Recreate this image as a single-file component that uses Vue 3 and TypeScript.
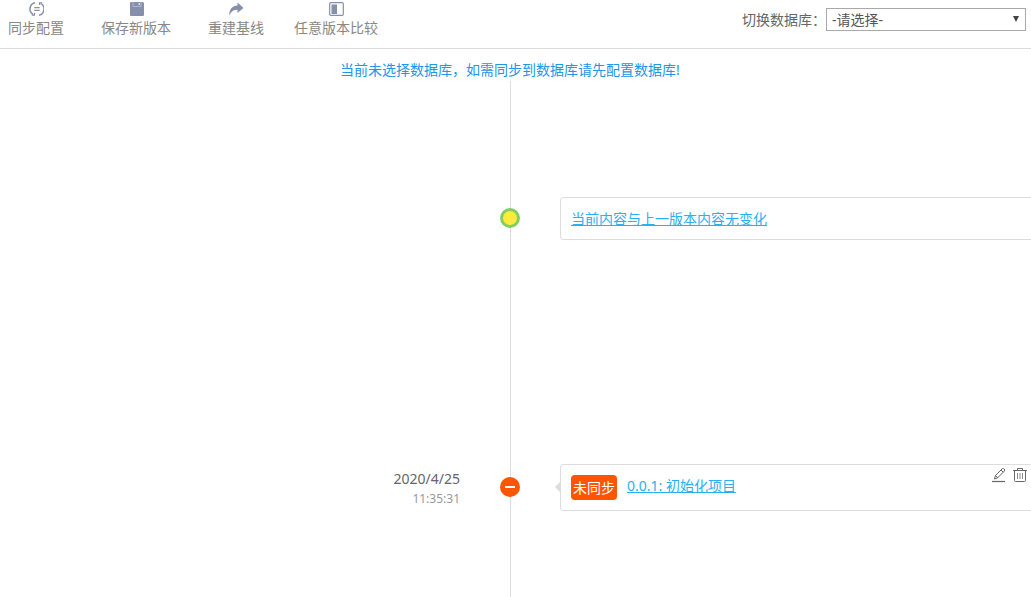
<script setup lang="ts">
import { ref } from 'vue'

interface Tool {
  id: string
  label: string
}

const tools: Tool[] = [
  { id: 'sync', label: '同步配置' },
  { id: 'save', label: '保存新版本' },
  { id: 'rebuild', label: '重建基线' },
  { id: 'compare', label: '任意版本比较' },
]
const database = ref('')
</script>

<template>
  <div class="page">
    <header class="toolbar">
      <nav class="tools">
        <button v-for="tool in tools" :key="tool.id" type="button" class="tool">
          <svg class="tool-icon" viewBox="0 0 16 16" aria-hidden="true">
            <g v-if="tool.id === 'sync'" fill="none" stroke="#8690ac" stroke-width="1.5">
              <path d="M7 2.800A6.300 6.300 0 0 0 5.500 14.600M11 15.200A6.300 6.300 0 0 0 12.500 3.400" />
              <path d="M6.300 7.700h5.400M6.300 10.400h5.400" stroke-width="1.300" />
              <path d="M3.800 15.300H6.500V13M14.200 2.700H11.500V5" stroke-width="1.100" />
            </g>
            <g v-else-if="tool.id === 'save'">
              <path fill="#8690ac" d="M3 2h12l1 1v12a1 1 0 0 1-1 1H3a1 1 0 0 1-1-1V3a1 1 0 0 1 1-1z" />
              <path d="M5 2v4.500h8V2" fill="none" stroke="#b9bfcf" stroke-width=".8" />
              <path d="M10.500 3h1.500v2h-1.500z" fill="#d5d9e3" />
            </g>
            <path v-else-if="tool.id === 'rebuild'" fill="#8690ac" d="M9.500 2.500 15.500 8l-6 5v-3.200C5.500 9.600 3 11.500 1.300 15.500 1 9.500 4.200 5.800 9.500 5.500z" />
            <g v-else>
              <rect x="1.700" y="2.700" width="13.600" height="12.600" rx="1" fill="none" stroke="#8690ac" stroke-width="1.200" />
              <path fill="#8690ac" d="M3.500 4.500H9v9.500H3.500z" />
            </g>
          </svg>
          <span>{{ tool.label }}</span>
        </button>
      </nav>
      <div class="switcher">
        <label for="database">切换数据库：</label>
        <span class="select-box">
          <select id="database" v-model="database">
            <option value="">-请选择-</option>
          </select>
          <svg class="caret" viewBox="0 0 8 8" aria-hidden="true"><path d="M1 1h6L4 7z" fill="#444" /></svg>
        </span>
      </div>
    </header>

    <main class="content">
      <p class="notice">当前未选择数据库，如需同步到数据库请先配置数据库!</p>
      <ol class="timeline">
        <li class="entry">
          <span class="node current"></span>
          <div class="card">
            <a href="#current">当前内容与上一版本内容无变化</a>
          </div>
        </li>
        <li class="entry">
          <div class="when">
            <time class="date" datetime="2020-04-25">2020/4/25</time>
            <time class="time" datetime="11:35:31">11:35:31</time>
          </div>
          <span class="node pending"></span>
          <div class="card version">
            <span class="badge">未同步</span>
            <a href="#v0.0.1">0.0.1: 初始化项目</a>
            <div class="actions">
              <button type="button" aria-label="编辑">
                <svg viewBox="0 0 16 16" fill="none" stroke="#666" aria-hidden="true">
                  <path d="M1 14.500h13" stroke-width="1.200" />
                  <path d="M3.500 12l1-3.500 6.700-6.700q1-.8 2 .2t.2 2L6.700 10.800zM10 3l2.200 2.200M4.500 8.500l2.200 2.300" />
                </svg>
              </button>
              <button type="button" aria-label="删除">
                <svg viewBox="0 0 16 16" fill="none" stroke="#666" aria-hidden="true">
                  <path d="M1 3.500h14M5.500 3.500v-2h5v2M2.500 3.500v10q0 1 1 1h9q1 0 1-1v-10" />
                  <path d="M5.500 6v6M8 6v6M10.500 6v6" stroke="#888" />
                </svg>
              </button>
            </div>
          </div>
        </li>
      </ol>
    </main>
  </div>
</template>

<style>
body {
  margin: 0;
  background: #fff;
}
</style>

<style scoped>
.page {
  display: flex;
  flex-direction: column;
  min-height: 100vh;
  overflow: hidden;
  color: #666;
  font: 14px/20px "Noto Sans", "Noto Sans CJK SC", sans-serif;
}
.toolbar {
  display: flex;
  justify-content: space-between;
  box-sizing: border-box;
  height: 49px;
  border-bottom: 1px solid #ddd;
}
.tools {
  display: flex;
}
button {
  padding: 0;
  border: 0;
  background: none;
  font: inherit;
  cursor: pointer;
}
.tool {
  display: flex;
  flex-direction: column;
  align-items: center;
  width: 100px;
  height: 40px;
  color: #888;
}
.tool:first-child {
  width: 72px;
  margin-right: 14px;
}
.tool-icon {
  width: 16px;
  height: 16px;
  margin-bottom: 2px;
}
.switcher {
  display: flex;
  align-items: center;
  height: 23px;
  padding: 8px 5px 0 0;
}
.select-box {
  position: relative;
  width: 200px;
}
select {
  display: block;
  appearance: none;
  width: 100%;
  height: 23px;
  padding: 0 20px 0 5px;
  border: 1px solid #a9a9a9;
  border-radius: 0;
  background: #fff;
  color: #555;
  font: inherit;
}
.caret {
  position: absolute;
  top: 7px;
  right: 6px;
  width: 8px;
  height: 8px;
  pointer-events: none;
}
.content {
  display: flex;
  flex: 1;
  flex-direction: column;
  margin-right: 11px;
}
.notice {
  margin: 0;
  padding: 11px 0 1px;
  color: #2196e8;
  text-align: center;
}
.timeline {
  position: relative;
  flex: 1;
  margin: 0;
  padding: 116px 0 0;
  list-style: none;
}
.timeline::before {
  content: "";
  position: absolute;
  top: 0;
  bottom: 0;
  left: 50%;
  width: 1px;
  background: #ddd;
}
.entry {
  position: relative;
  display: grid;
  grid-template-columns: 1fr 100px 1fr;
  align-items: center;
  margin-bottom: 224px;
}
.entry:last-child {
  margin-bottom: 0;
}
.when {
  grid-column: 1;
  padding-top: 2px;
  text-align: right;
}
.date,
.time {
  display: block;
}
.time {
  color: #999;
  font-size: 12px;
}
.node {
  grid-column: 2;
  box-sizing: border-box;
  justify-self: center;
  width: 20px;
  height: 20px;
  margin-bottom: 1px;
  border-radius: 50%;
}
.current {
  border: 3px solid #81cf63;
  background: #ffeb3b;
}
.pending {
  display: grid;
  place-items: center;
  background: #ff5500;
}
.pending::before {
  content: "";
  width: 10px;
  height: 2px;
  background: #fff;
}
.card {
  position: relative;
  grid-column: 3;
  display: flex;
  align-items: center;
  gap: 10px;
  box-sizing: border-box;
  margin-right: -17px;
  padding: 11px 10px 10px;
  border: 1px solid #ddd;
  border-radius: 3px;
}
.version {
  padding-top: 10px;
}
.version::before {
  content: "";
  position: absolute;
  top: 17px;
  left: -6px;
  border: solid transparent;
  border-width: 5px 5px 5px 0;
  border-right-color: #ddd;
}
.card a {
  color: #29b0f0;
  text-decoration: underline;
}
.version a {
  padding-bottom: 3px;
}
.badge {
  padding: 3px 2px 2px;
  border-radius: 4px;
  background: #ff5500;
  color: #fff;
}
.actions {
  position: absolute;
  top: 2px;
  right: 8px;
  display: flex;
  gap: 5px;
}
.actions svg {
  display: block;
  width: 16px;
  height: 16px;
}
</style>
